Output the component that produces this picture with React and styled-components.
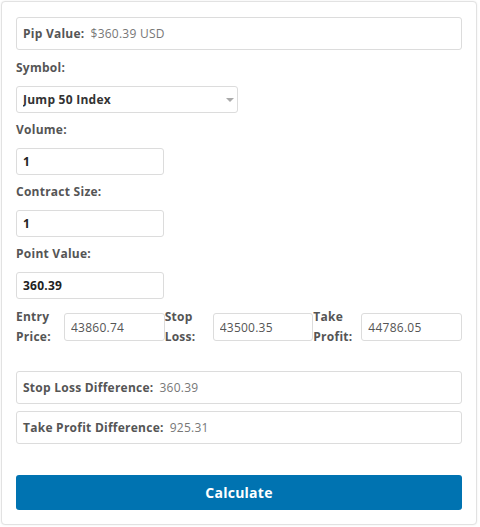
import React from "react";
import styled, { createGlobalStyle } from "styled-components";

const Global = createGlobalStyle`
  html, body { margin: 0; padding: 0; background: #fff; }
  body { font-family: "Open Sans", "Liberation Sans", sans-serif; letter-spacing: 0.25px; }
  * { box-sizing: border-box; }
`;

const Page = styled.div`
  padding: 1px;
  width: 480px;
`;

const Card = styled.div`
  width: 476px;
  border: 1px solid #e2e2e2;
  border-radius: 4px;
  box-shadow: 0 0 2px rgba(0, 0, 0, 0.08);
  padding: 15px 14px 14px;
  background: #fff;
`;

const InfoBox = styled.div`
  height: 33px;
  border: 1px solid #dcdcdc;
  border-radius: 3px;
  display: flex;
  align-items: center;
  padding: 0 6px;
  font-size: 12px;
  margin-bottom: ${(p) => p.$mb || 0}px;
`;

const InfoLabel = styled.span`
  font-weight: 700;
  color: #555;
  margin-right: 6px;
`;

const InfoValue = styled.span`
  color: #777;
`;

const Label = styled.div`
  font-size: 12px;
  font-weight: 700;
  color: #555;
  line-height: 16px;
  margin: ${(p) => p.$mt || 9}px 0 10px;
`;

const SelectWrap = styled.div`
  position: relative;
  width: 222px;
  &::after {
    content: "";
    position: absolute;
    right: 4px;
    top: 12px;
    border-left: 4px solid transparent;
    border-right: 4px solid transparent;
    border-top: 4px solid #aaa;
    pointer-events: none;
  }
`;

const Select = styled.select`
  appearance: none;
  width: 100%;
  height: 27px;
  border: 1px solid #dcdcdc;
  border-radius: 3px;
  background: #fff;
  padding: 0 6px;
  font-family: inherit;
  letter-spacing: inherit;
  font-size: 12px;
  font-weight: 700;
  color: #333;
  outline: none;
`;

const Input = styled.input`
  display: block;
  width: ${(p) => p.$w || "100%"};
  height: ${(p) => p.$h || 27}px;
  border: 1px solid #dcdcdc;
  border-radius: 3px;
  padding: 0 6px;
  font-family: inherit;
  letter-spacing: inherit;
  font-size: 12px;
  font-weight: ${(p) => (p.$bold ? 700 : 400)};
  color: ${(p) => (p.$bold ? "#222" : "#555")};
  outline: none;
  background: #fff;
`;

const PriceRow = styled.div`
  display: grid;
  grid-template-columns: repeat(3, 1fr);
  margin: 8px 0 24px;
`;

const PriceCol = styled.div`
  display: flex;
  align-items: center;
`;

const PriceLabel = styled.div`
  width: 48px;
  flex: none;
  font-size: 12px;
  font-weight: 700;
  color: #555;
  line-height: 20px;
`;

const Button = styled.button`
  display: block;
  width: 100%;
  height: 35px;
  margin-top: 31px;
  border: none;
  border-radius: 3px;
  background: #0073b1;
  color: #fff;
  font-family: inherit;
  letter-spacing: inherit;
  font-size: 14px;
  font-weight: 700;
  cursor: pointer;
`;

export default function App() {
  return (
    <Page>
      <Global />
      <Card>
        <InfoBox>
          <InfoLabel>Pip Value:</InfoLabel>
          <InfoValue>$360.39 USD</InfoValue>
        </InfoBox>

        <Label $mt={10}>Symbol:</Label>
        <SelectWrap>
          <Select defaultValue="jump50">
            <option value="jump50">Jump 50 Index</option>
          </Select>
        </SelectWrap>

        <Label>Volume:</Label>
        <Input $w="148px" $bold defaultValue="1" />

        <Label>Contract Size:</Label>
        <Input $w="148px" $bold defaultValue="1" />

        <Label>Point Value:</Label>
        <Input $w="148px" $bold defaultValue="360.39" />

        <PriceRow>
          <PriceCol>
            <PriceLabel>Entry Price:</PriceLabel>
            <Input $h={28} defaultValue="43860.74" />
          </PriceCol>
          <PriceCol>
            <PriceLabel>Stop Loss:</PriceLabel>
            <Input $h={28} defaultValue="43500.35" />
          </PriceCol>
          <PriceCol>
            <PriceLabel>Take Profit:</PriceLabel>
            <Input $h={28} defaultValue="44786.05" />
          </PriceCol>
        </PriceRow>

        <InfoBox $mb={7}>
          <InfoLabel>Stop Loss Difference:</InfoLabel>
          <InfoValue>360.39</InfoValue>
        </InfoBox>
        <InfoBox>
          <InfoLabel>Take Profit Difference:</InfoLabel>
          <InfoValue>925.31</InfoValue>
        </InfoBox>

        <Button>Calculate</Button>
      </Card>
    </Page>
  );
}
